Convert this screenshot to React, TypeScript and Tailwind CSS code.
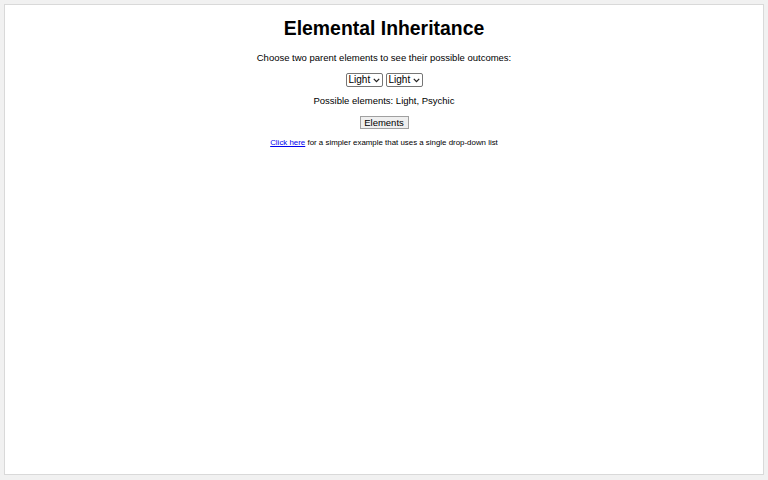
import React from "react";

function Chevron() {
  return (
    <svg width="7" height="5" viewBox="0 0 7 5" className="ml-[3px]">
      <path d="M0.8 0.9 L3.5 3.6 L6.2 0.9" fill="none" stroke="#222" strokeWidth="1.3" />
    </svg>
  );
}

function Dropdown({ value }: { value: string }) {
  return (
    <div className="flex h-[14px] w-[37px] items-center rounded-[2px] border border-[#767676] bg-white pl-[2px] text-[10px] leading-[12px]">
      <span>{value}</span>
      <Chevron />
    </div>
  );
}

export default function App() {
  return (
    <div className="h-[480px] w-[768px] bg-[#f1f1f1] p-1" style={{ fontFamily: '"Liberation Sans", Arial, sans-serif' }}>
      <div className="flex h-[471px] flex-col items-center border border-[#d9d9d9] bg-white text-black">
        <h1 className="mt-[11px] text-[19.4px] font-bold leading-[24px]">Elemental Inheritance</h1>
        <p className="mt-[11px] text-[9.5px] leading-[14px]">Choose two parent elements to see their possible outcomes:</p>
        <div className="mt-[8px] flex gap-[3px]">
          <Dropdown value="Light" />
          <Dropdown value="Light" />
        </div>
        <p className="mt-[7px] text-[9.5px] leading-[14px]">Possible elements: Light, Psychic</p>
        <button className="mt-[8px] flex h-[13px] w-[49px] items-center justify-center border border-[#a0a0a0] bg-[#efefef] text-[9.5px] leading-[11px]">
          Elements
        </button>
        <p className="mt-[9px] text-[7.9px] leading-[10px]">
          <a href="#" className="text-[#0000ee] underline">Click here</a> for a simpler example that uses a single drop-down list
        </p>
      </div>
    </div>
  );
}
